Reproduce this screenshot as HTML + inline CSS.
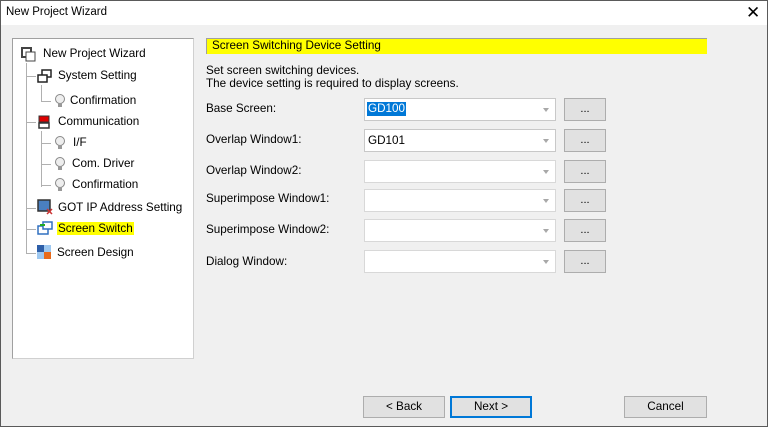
<!DOCTYPE html>
<html><head><style>
*{margin:0;padding:0;box-sizing:border-box}
body{width:768px;height:427px;background:#f0f0f0;font-family:"Liberation Sans",sans-serif;font-size:11.7px;color:#000;position:relative;overflow:hidden;border:1px solid #5a5a5a}
.a{position:absolute;white-space:nowrap}
.title{left:0;top:0;width:766px;height:24px;background:#fff}
.tree{left:11px;top:37px;width:182px;height:321px;background:#fff;border:1px solid #a0a0a0;border-right-color:#d0d0d0;border-bottom-color:#d0d0d0}
.combo{position:absolute;left:363px;width:192px;height:23px;background:#fff;border:1px solid #c8c8c8}
.combo:after{content:"";position:absolute;right:6px;top:9px;border:3.5px solid transparent;border-top:4px solid #a8a8a8}
.dot{position:absolute;left:563px;width:42px;height:23px;background:#e1e1e1;border:1px solid #adadad;text-align:center;font-size:11px;line-height:20px}
.btn{position:absolute;top:395px;height:22px;background:#e1e1e1;border:1px solid #adadad;text-align:center;line-height:19px}
.lbl{position:absolute;left:205px}
.ln{position:absolute;border-left:1px solid #b0b0b0}
.hl{position:absolute;border-top:1px solid #b0b0b0}
</style></head><body>
<div class="a title"></div>
<div class="a" style="left:5px;top:5px;font-size:11.5px">New Project Wizard</div>
<div class="a" style="left:745px;top:2px;font-size:17px;font-weight:300">✕</div>
<div class="a tree">
<div class="ln" style="left:13px;top:24px;height:190px"></div>
<div class="ln" style="left:28px;top:46px;height:16px"></div>
<div class="ln" style="left:28px;top:92px;height:56px"></div>
<div class="hl" style="left:13px;top:37px;width:10px"></div>
<div class="hl" style="left:13px;top:83px;width:10px"></div>
<div class="hl" style="left:13px;top:169px;width:10px"></div>
<div class="hl" style="left:13px;top:190px;width:10px"></div>
<div class="hl" style="left:13px;top:214px;width:10px"></div>
<div class="hl" style="left:28px;top:62px;width:10px"></div>
<div class="hl" style="left:28px;top:104px;width:10px"></div>
<div class="hl" style="left:28px;top:125px;width:10px"></div>
<div class="hl" style="left:28px;top:146px;width:10px"></div>
</div>
<svg class="a" style="left:20px;top:46px" width="15" height="15"><rect x="1" y="1" width="9" height="9" fill="#fff" stroke="#444" stroke-width="2"/><rect x="5" y="5" width="9" height="9" fill="#fff" stroke="#444"/></svg>
<svg class="a" style="left:36px;top:68px" width="15" height="14"><rect x="5" y="1" width="9" height="7" fill="#fff" stroke="#222" stroke-width="1.5"/><rect x="1" y="6" width="9" height="7" fill="#fff" stroke="#222" stroke-width="1.5"/></svg>
<svg class="a" style="left:36px;top:114px" width="14" height="14"><rect x="2" y="1" width="10" height="6" fill="#d00" stroke="#333"/><rect x="2" y="8" width="10" height="5" fill="#fff" stroke="#333" stroke-width="1.5"/></svg>
<svg class="a" style="left:36px;top:198px" width="16" height="16"><rect x="1" y="1" width="12" height="11" fill="#4a7fc0" stroke="#333" stroke-width="1.5"/><path d="M10 10l5 5M15 10l-5 5" stroke="#c33" stroke-width="1.5"/></svg>
<svg class="a" style="left:36px;top:220px" width="16" height="15"><rect x="1" y="5" width="10" height="8" fill="#fff" stroke="#3070c0" stroke-width="1.5"/><rect x="6" y="1" width="9" height="7" fill="#fff" stroke="#3070c0" stroke-width="1.5"/><path d="M3 4h5" stroke="#2a2" stroke-width="2"/></svg>
<svg class="a" style="left:36px;top:244px" width="14" height="14"><rect x="0" y="0" width="7" height="7" fill="#2d5ea8"/><rect x="7" y="0" width="7" height="7" fill="#9ec8f0"/><rect x="0" y="7" width="7" height="7" fill="#9ec8f0"/><rect x="7" y="7" width="7" height="7" fill="#e86a1a"/></svg>
<svg class="a" style="left:53px;top:93px" width="12" height="14"><circle cx="6" cy="5" r="4.5" fill="#eee" stroke="#888"/><rect x="4" y="9" width="4" height="4" fill="#999"/></svg>
<svg class="a" style="left:53px;top:135px" width="12" height="14"><circle cx="6" cy="5" r="4.5" fill="#eee" stroke="#888"/><rect x="4" y="9" width="4" height="4" fill="#999"/></svg>
<svg class="a" style="left:53px;top:156px" width="12" height="14"><circle cx="6" cy="5" r="4.5" fill="#eee" stroke="#888"/><rect x="4" y="9" width="4" height="4" fill="#999"/></svg>
<svg class="a" style="left:53px;top:177px" width="12" height="14"><circle cx="6" cy="5" r="4.5" fill="#eee" stroke="#888"/><rect x="4" y="9" width="4" height="4" fill="#999"/></svg>
<div class="a" style="left:42px;top:46px">New Project Wizard</div>
<div class="a" style="left:57px;top:68px">System Setting</div>
<div class="a" style="left:69px;top:93px">Confirmation</div>
<div class="a" style="left:57px;top:114px">Communication</div>
<div class="a" style="left:72px;top:135px">I/F</div>
<div class="a" style="left:71px;top:156px">Com. Driver</div>
<div class="a" style="left:71px;top:177px">Confirmation</div>
<div class="a" style="left:57px;top:200px">GOT IP Address Setting</div>
<div class="a" style="left:56px;top:221px;background:#ffff00;padding:0 1px">Screen Switch</div>
<div class="a" style="left:56px;top:245px">Screen Design</div>

<div class="a" style="left:205px;top:37px;width:501px;height:16px;background:#ffff00;border-top:1px solid #a0a0a0;border-left:1px solid #a0a0a0;padding-left:5px;line-height:14px">Screen Switching Device Setting</div>
<div class="a" style="left:205px;top:63px;line-height:13px">Set screen switching devices.<br>The device setting is required to display screens.</div>

<div class="lbl" style="top:101px">Base Screen:</div>
<div class="lbl" style="top:132px">Overlap Window1:</div>
<div class="lbl" style="top:163px">Overlap Window2:</div>
<div class="lbl" style="top:191px">Superimpose Window1:</div>
<div class="lbl" style="top:222px">Superimpose Window2:</div>
<div class="lbl" style="top:254px">Dialog Window:</div>

<div class="combo" style="top:97px"><span style="position:absolute;left:2px;top:3px;background:#0078d7;color:#fff;padding:0 1px;line-height:14px">GD100</span></div>
<div class="combo" style="top:128px"><span style="position:absolute;left:3px;top:4px">GD101</span></div>
<div class="combo" style="top:159px;border-color:#d8d8d8"></div>
<div class="combo" style="top:188px;border-color:#d8d8d8"></div>
<div class="combo" style="top:218px;border-color:#d8d8d8"></div>
<div class="combo" style="top:249px;border-color:#d8d8d8"></div>
<div class="dot" style="top:97px">...</div>
<div class="dot" style="top:128px">...</div>
<div class="dot" style="top:159px">...</div>
<div class="dot" style="top:188px">...</div>
<div class="dot" style="top:218px">...</div>
<div class="dot" style="top:249px">...</div>

<div class="btn" style="left:362px;width:82px">&lt; Back</div>
<div class="btn" style="left:449px;width:82px;border:2px solid #0078d7;line-height:17px">Next &gt;</div>
<div class="btn" style="left:623px;width:83px">Cancel</div>
</body></html>
